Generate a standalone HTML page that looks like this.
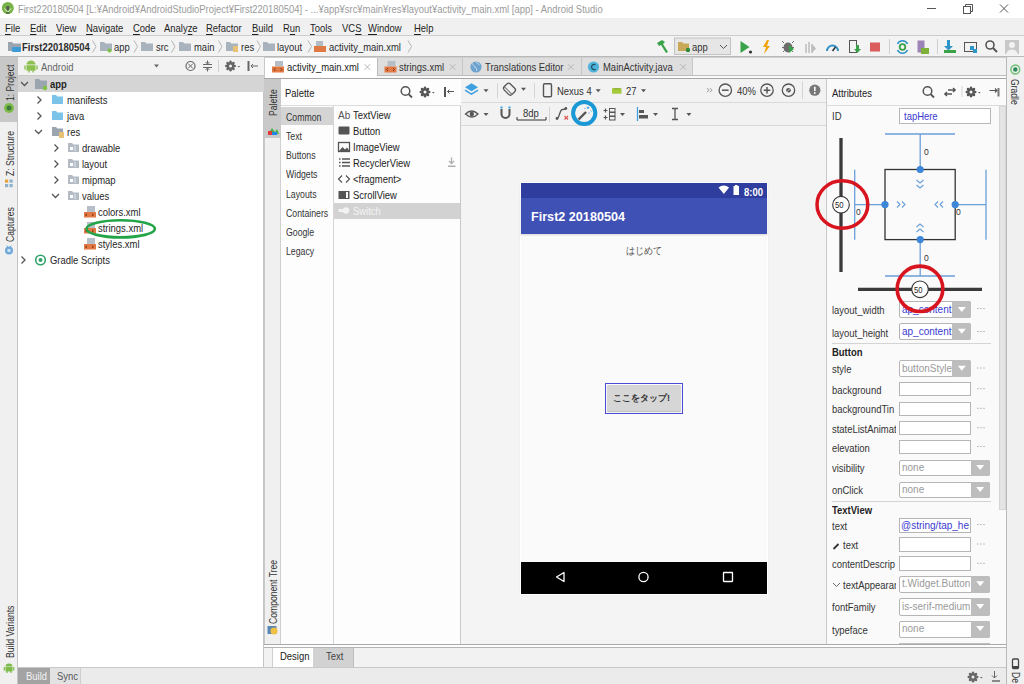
<!DOCTYPE html>
<html><head><meta charset="utf-8"><style>
*{box-sizing:border-box;margin:0;padding:0}
html,body{width:1024px;height:684px;overflow:hidden;background:#f2f2f2;font-family:"Liberation Sans",sans-serif;font-size:10px;color:#333}
.a{position:absolute}
.t{position:absolute;white-space:nowrap;font-size:10.5px;line-height:12px;color:#333;transform:scaleX(var(--sx,0.9));transform-origin:0 50%}
svg{position:absolute;overflow:visible}
.rot{position:absolute;white-space:nowrap;font-size:10px;line-height:12px;color:#333;transform-origin:0 0}
</style></head><body>
<div class="a" style="left:0px;top:0px;width:1024px;height:18px;background:#fff"></div>
<svg style="left:0px;top:0px" width="18" height="18" viewBox="0 0 18 18"><circle cx="7.8" cy="8" r="6" fill="#78b347"/><path d="M6.2 6.3h3.2l-0.6 4.2h-2z" fill="#555"/><path d="M4.6 8.6l3.2 3.6 3.4-3.8" stroke="#e8f3dc" stroke-width="1" fill="none"/><rect x="6" y="12.2" width="3.6" height="1.4" fill="#3b5f2a"/></svg>
<div class="t" style="left:18px;top:3px;color:#9b9b9b;">First220180504 [L:¥Android¥AndroidStudioProject¥First220180504] - ...¥app¥src¥main¥res¥layout¥activity_main.xml [app] - Android Studio</div>
<div class="a" style="left:927px;top:8px;width:9px;height:1px;background:#555"></div>
<svg style="left:962px;top:3px" width="12" height="12" viewBox="0 0 12 12"><rect x="1.5" y="3.5" width="7" height="7" fill="none" stroke="#555"/><path d="M3.5 3.5V1.5H10.5V8.5H8.5" fill="none" stroke="#555"/></svg>
<svg style="left:999px;top:4px" width="10" height="10" viewBox="0 0 10 10"><path d="M1 0.5L9 8.5M9 0.5L1 8.5" stroke="#555" stroke-width="1"/></svg>
<div class="a" style="left:0px;top:18px;width:1024px;height:18px;background:#f0f0f0;border-bottom:1px solid #cdcdcd"></div>
<div class="t" style="left:4.9px;top:22px;color:#1e1e1e;"><u style="text-underline-offset:1.5px">F</u>ile</div>
<div class="t" style="left:29.5px;top:22px;color:#1e1e1e;"><u style="text-underline-offset:1.5px">E</u>dit</div>
<div class="t" style="left:55.9px;top:22px;color:#1e1e1e;"><u style="text-underline-offset:1.5px">V</u>iew</div>
<div class="t" style="left:85.8px;top:22px;color:#1e1e1e;"><u style="text-underline-offset:1.5px">N</u>avigate</div>
<div class="t" style="left:132.7px;top:22px;color:#1e1e1e;"><u style="text-underline-offset:1.5px">C</u>ode</div>
<div class="t" style="left:164.0px;top:22px;color:#1e1e1e;">Analy<u style="text-underline-offset:1.5px">z</u>e</div>
<div class="t" style="left:206.3px;top:22px;color:#1e1e1e;"><u style="text-underline-offset:1.5px">R</u>efactor</div>
<div class="t" style="left:252.0px;top:22px;color:#1e1e1e;"><u style="text-underline-offset:1.5px">B</u>uild</div>
<div class="t" style="left:283.3px;top:22px;color:#1e1e1e;">R<u style="text-underline-offset:1.5px">u</u>n</div>
<div class="t" style="left:309.7px;top:22px;color:#1e1e1e;"><u style="text-underline-offset:1.5px">T</u>ools</div>
<div class="t" style="left:341.9px;top:22px;color:#1e1e1e;">VC<u style="text-underline-offset:1.5px">S</u></div>
<div class="t" style="left:368.3px;top:22px;color:#1e1e1e;"><u style="text-underline-offset:1.5px">W</u>indow</div>
<div class="t" style="left:413.7px;top:22px;color:#1e1e1e;"><u style="text-underline-offset:1.5px">H</u>elp</div>
<div class="a" style="left:0px;top:36px;width:1024px;height:21px;background:#f3f3f3;border-bottom:1px solid #b9b9b9"></div>
<svg style="left:0;top:0" width="1024" height="60"><path d="M8 42h4l1.5 1.5H21V51H8Z" fill="#9aa5b0"/><rect x="12" y="47" width="9" height="5" rx="1" fill="#3d9bd6"/><path d="M100 42h4l1.5 1.5H112V51H100Z" fill="#a9b3bd"/><circle cx="109.5" cy="50.5" r="2" fill="#7fc241"/><path d="M141 42h4l1.5 1.5H153V51H141Z" fill="#a9b3bd"/><path d="M179 42h4l1.5 1.5H191V51H179Z" fill="#a9b3bd"/><path d="M226 42h4l1.5 1.5H238V51H226Z" fill="#a9b3bd"/><rect x="233" y="46" width="5" height="6" fill="#e8c277"/><path d="M263 42h4l1.5 1.5H275V51H263Z" fill="#a9b3bd"/><rect x="316" y="41" width="7" height="5" fill="#b3bcc6"/><rect x="314" y="46" width="12" height="6" fill="#e07a45"/><path d="M92.5 40.5L96.0 46.5L92.5 52.5" fill="none" stroke="#b5b5b5" stroke-width="1"/><path d="M134 40.5L137.5 46.5L134 52.5" fill="none" stroke="#b5b5b5" stroke-width="1"/><path d="M171.5 40.5L175.0 46.5L171.5 52.5" fill="none" stroke="#b5b5b5" stroke-width="1"/><path d="M218.5 40.5L222.0 46.5L218.5 52.5" fill="none" stroke="#b5b5b5" stroke-width="1"/><path d="M257 40.5L260.5 46.5L257 52.5" fill="none" stroke="#b5b5b5" stroke-width="1"/><path d="M308 40.5L311.5 46.5L308 52.5" fill="none" stroke="#b5b5b5" stroke-width="1"/><path d="M408 40.5L411.5 46.5L408 52.5" fill="none" stroke="#b5b5b5" stroke-width="1"/></svg>
<div class="t" style="left:22px;top:41px;font-weight:bold;color:#2b2b2b;">First220180504</div>
<div class="t" style="left:114.2px;top:41px;color:#2b2b2b">app</div>
<div class="t" style="left:155.6px;top:41px;color:#2b2b2b">src</div>
<div class="t" style="left:193.9px;top:41px;color:#2b2b2b">main</div>
<div class="t" style="left:240.5px;top:41px;color:#2b2b2b">res</div>
<div class="t" style="left:277px;top:41px;color:#2b2b2b">layout</div>
<div class="t" style="left:329px;top:41px;color:#2b2b2b">activity_main.xml</div>
<svg style="left:0;top:0" width="1024" height="60"><path d="M657 43l5-3 3 2-2 2 5 8-2 1-5-8-2 1z" fill="#3aa34a"/><rect x="674.5" y="38" width="56" height="16.5" fill="#e6e6e6" stroke="#c2c2c2"/><path d="M678 42h4l1.5 1.5H689V51H678Z" fill="#c9a857"/><circle cx="688" cy="50" r="2.2" fill="#2e8b3e"/><path d="M720 45l3.5 3.5L727 45" fill="none" stroke="#555" stroke-width="1"/><path d="M740.5 41v12l9-6z" fill="#3aa34a"/><circle cx="750.5" cy="52" r="1.6" fill="#333"/><path d="M767 40l-4 7h3l-2 7 6-8h-3l2-6z" fill="#f0a30a"/><ellipse cx="788" cy="47.5" rx="4.5" ry="5" fill="#6d6d6d"/><path d="M784 43l-2-2M792 43l2-2M782 47.5h2M792 47.5h2M783 52l1.5-1.5M793 52l-1.5-1.5" stroke="#6d6d6d"/><path d="M789 45v8l5-4z" fill="#3aa34a"/><path d="M806 44v9M809 42v11M812 44v9" stroke="#bdbdbd" stroke-width="1.5"/><path d="M812 44l4 4.5-4 4.5z" fill="#bdbdbd"/><path d="M827 51a5.5 5.5 0 0 1 11 0" fill="none" stroke="#3592c4" stroke-width="2"/><path d="M832.5 51l3-4" stroke="#333" stroke-width="1.5"/><rect x="849.5" y="40.5" width="7" height="12" fill="none" stroke="#555" stroke-width="1"/><path d="M856 45h3v4h2l-3.5 4l-3.5-4h2z" fill="#3aa34a"/><rect x="870" y="42.5" width="10" height="9" fill="#db5c5c"/><path d="M889.5 39v15M937.5 39v15" stroke="#cfcfcf"/><path d="M897.5 44a5.5 5.5 0 0 1 10 0M907.5 50a5.5 5.5 0 0 1-10 0" fill="none" stroke="#2f95c9" stroke-width="1.6"/><circle cx="902.5" cy="47" r="2.8" fill="none" stroke="#3aa34a" stroke-width="1.8"/><rect x="917.5" y="40.5" width="7" height="12" fill="#9d84b7"/><rect x="921" y="48" width="8" height="6" fill="#7fb03a"/><path d="M947 40v6l-3 0l4.5 4.5l4.5-4.5h-3v-6z" fill="#2f95c9"/><rect x="944" y="50" width="12" height="3" fill="#3aa34a"/><rect x="964.5" y="42.5" width="12" height="9" fill="none" stroke="#555"/><rect x="970" y="46" width="4" height="4" fill="#2f95c9"/><rect x="973" y="49" width="4" height="4" fill="#2f95c9"/><circle cx="990" cy="45" r="4" fill="none" stroke="#555" stroke-width="1.6"/><path d="M993 48l4 4" stroke="#555" stroke-width="2"/><rect x="1005" y="40" width="14" height="14" fill="#c8c8c8"/><circle cx="1012" cy="45" r="3" fill="#f2f2f2"/><path d="M1006.5 54a5.5 4.5 0 0 1 11 0z" fill="#f2f2f2"/></svg>
<div class="t" style="left:692px;top:41px;color:#333">app</div>
<div class="a" style="left:0px;top:57px;width:18px;height:627px;background:#f0f0f0;border-right:1px solid #c4c4c4"></div>
<div class="a" style="left:0px;top:57px;width:17px;height:65px;background:#c8c8c8"></div>
<div class="rot" style="left:4.800000000000001px;top:100.6px;transform:rotate(-90deg) scaleX(0.86);">1: Project</div>
<div class="rot" style="left:4.800000000000001px;top:176px;transform:rotate(-90deg) scaleX(0.86);">Z: Structure</div>
<div class="rot" style="left:4.800000000000001px;top:241.7px;transform:rotate(-90deg) scaleX(0.86);">Captures</div>
<div class="rot" style="left:4.800000000000001px;top:658px;transform:rotate(-90deg) scaleX(0.86);">Build Variants</div>
<svg style="left:0;top:0" width="20" height="684"><circle cx="9" cy="108" r="5" fill="#7dbb4a"/><circle cx="9" cy="108" r="2.5" fill="#3f7a3a"/><rect x="5" y="179.5" width="3.2" height="3.2" fill="#e8a23c"/><rect x="9.5" y="179.5" width="3.2" height="3.2" fill="#8fb2cc"/><rect x="5" y="184" width="3.2" height="3.2" fill="#8fb2cc"/><rect x="9.5" y="184" width="3.2" height="3.2" fill="#8fb2cc"/><circle cx="9" cy="250.5" r="4" fill="#6fa8d8"/><circle cx="9" cy="250.5" r="1.8" fill="#c9e2f5"/><path d="M6.5 245.5l1.5 1.5M11.5 245.5l-1.5 1.5" stroke="#6fa8d8"/><path d="M5.5 666.5a3.5 3 0 0 1 7 0z" fill="#7dbb4a"/><rect x="5.5" y="667" width="7" height="4.5" fill="#7dbb4a"/><path d="M4.3 667v3.5M13.7 667v3.5M7 671v2M11 671v2" stroke="#7dbb4a" stroke-width="1.2"/></svg>
<div class="a" style="left:18px;top:57px;width:246px;height:610px;background:#fff;border-right:1px solid #c4c4c4"></div>
<div class="a" style="left:18px;top:57px;width:246px;height:19px;background:#f2f2f2;border-bottom:1px solid #c9c9c9"></div>
<div class="a" style="left:18px;top:76px;width:246px;height:16px;background:#d5d5d5"></div>
<svg style="left:0;top:0" width="270" height="80"><path d="M26.5 64.5a4.5 4 0 0 1 9 0z" fill="#8cc152"/><rect x="26.5" y="65.2" width="9" height="5.5" fill="#8cc152"/><path d="M25 65.5v4M37 65.5v4" stroke="#8cc152" stroke-width="1.4"/><path d="M29 70.5v2M33 70.5v2" stroke="#8cc152" stroke-width="1.4"/><path d="M154 64.5h5l-2.5 3z" fill="#666"/><circle cx="190.5" cy="66" r="4.5" fill="none" stroke="#666" stroke-width="1.2"/><path d="M188 63.5l5 5M193 63.5l-5 5" stroke="#666" stroke-width="1"/><path d="M203 64.5h9M203 67.5h9M207.5 60.5v3M207.5 68.5v3M205.5 62l2 2 2-2M205.5 70l2-2 2 2" stroke="#666" stroke-width="1" fill="none"/><path d="M218.5 60v12" stroke="#d0d0d0"/><circle cx="230.5" cy="66" r="3.9" fill="#666"/><circle cx="234.80" cy="66.00" r="1.2" fill="#666"/><circle cx="233.54" cy="69.04" r="1.2" fill="#666"/><circle cx="230.50" cy="70.30" r="1.2" fill="#666"/><circle cx="227.46" cy="69.04" r="1.2" fill="#666"/><circle cx="226.20" cy="66.00" r="1.2" fill="#666"/><circle cx="227.46" cy="62.96" r="1.2" fill="#666"/><circle cx="230.50" cy="61.70" r="1.2" fill="#666"/><circle cx="233.54" cy="62.96" r="1.2" fill="#666"/><circle cx="230.5" cy="66" r="1.5" fill="#f2f2f2"/><path d="M237.5 66h2.6l-1.3 1.6z" fill="#666"/><path d="M248.5 61v10" stroke="#666" stroke-width="2"/><path d="M251 66h7M253 64l-2 2 2 2" stroke="#666" stroke-width="1" fill="none"/></svg>
<div class="t" style="left:41px;top:61px;color:#666">Android</div>
<div class="t" style="left:49.7px;top:78px;font-weight:bold;color:#262626">app</div>
<div class="t" style="left:66.5px;top:94px;color:#262626">manifests</div>
<div class="t" style="left:66.5px;top:110px;color:#262626">java</div>
<div class="t" style="left:66.5px;top:126px;color:#262626">res</div>
<div class="t" style="left:82.4px;top:142px;color:#262626">drawable</div>
<div class="t" style="left:82.4px;top:158px;color:#262626">layout</div>
<div class="t" style="left:82.4px;top:174px;color:#262626">mipmap</div>
<div class="t" style="left:82.4px;top:190px;color:#262626">values</div>
<div class="t" style="left:98.4px;top:206px;color:#262626">colors.xml</div>
<div class="t" style="left:98.4px;top:222px;color:#262626">strings.xml</div>
<div class="t" style="left:98.4px;top:238px;color:#262626">styles.xml</div>
<div class="t" style="left:50.4px;top:254px;color:#262626">Gradle Scripts</div>
<svg style="left:0;top:0" width="270" height="280"><path d="M21 82L24.5 85.5L28 82" fill="none" stroke="#555" stroke-width="1.3"/><path d="M35 79h4l1.5 1.5H47V89H35Z" fill="#9aa5b0"/><circle cx="45" cy="88" r="2.2" fill="#7fc241"/><path d="M37.5 96.5L41.0 100L37.5 103.5" fill="none" stroke="#555" stroke-width="1.3"/><path d="M52 95h4l1.5 1.5H63V104H52Z" fill="#7cc3ea"/><path d="M37.5 112.5L41.0 116L37.5 119.5" fill="none" stroke="#555" stroke-width="1.3"/><path d="M52 111h4l1.5 1.5H63V120H52Z" fill="#7cc3ea"/><path d="M35 130L38.5 133.5L42 130" fill="none" stroke="#555" stroke-width="1.3"/><path d="M52 127h4l1.5 1.5H63V136H52Z" fill="#9aa5b0"/><rect x="59" y="132" width="5" height="6" fill="#e8c277"/><path d="M54.5 144.5L58.0 148L54.5 151.5" fill="none" stroke="#555" stroke-width="1.3"/><path d="M68 143h4l1.5 1.5H79V152H68Z" fill="#b3bcc5"/><rect x="70" y="147" width="3" height="3" fill="#fff"/><rect x="74.5" y="146" width="1" height="5" fill="#e6eaee"/><path d="M54.5 160.5L58.0 164L54.5 167.5" fill="none" stroke="#555" stroke-width="1.3"/><path d="M68 159h4l1.5 1.5H79V168H68Z" fill="#b3bcc5"/><rect x="70" y="163" width="3" height="3" fill="#fff"/><rect x="74.5" y="162" width="1" height="5" fill="#e6eaee"/><path d="M54.5 176.5L58.0 180L54.5 183.5" fill="none" stroke="#555" stroke-width="1.3"/><path d="M68 175h4l1.5 1.5H79V184H68Z" fill="#b3bcc5"/><rect x="70" y="179" width="3" height="3" fill="#fff"/><rect x="74.5" y="178" width="1" height="5" fill="#e6eaee"/><path d="M52 194L55.5 197.5L59 194" fill="none" stroke="#555" stroke-width="1.3"/><path d="M68 191h4l1.5 1.5H79V200H68Z" fill="#b3bcc5"/><rect x="70" y="195" width="3" height="3" fill="#fff"/><rect x="74.5" y="194" width="1" height="5" fill="#e6eaee"/><rect x="87" y="206" width="8" height="6" fill="#b6bfc8"/><rect x="84" y="212" width="12" height="5.5" fill="#e27a45"/><path d="M87 213.5l-1.5 1.25 1.5 1.25M92 213.5l1.5 1.25-1.5 1.25" stroke="#7a2d10" fill="none" stroke-width="0.9"/><rect x="87" y="222" width="8" height="6" fill="#b6bfc8"/><rect x="84" y="228" width="12" height="5.5" fill="#e27a45"/><path d="M87 229.5l-1.5 1.25 1.5 1.25M92 229.5l1.5 1.25-1.5 1.25" stroke="#7a2d10" fill="none" stroke-width="0.9"/><rect x="87" y="238" width="8" height="6" fill="#b6bfc8"/><rect x="84" y="244" width="12" height="5.5" fill="#e27a45"/><path d="M87 245.5l-1.5 1.25 1.5 1.25M92 245.5l1.5 1.25-1.5 1.25" stroke="#7a2d10" fill="none" stroke-width="0.9"/><path d="M21.5 256.5L25.0 260L21.5 263.5" fill="none" stroke="#555" stroke-width="1.3"/><circle cx="40.5" cy="260" r="4.8" fill="none" stroke="#2fa36b" stroke-width="1.6"/><circle cx="40.5" cy="260" r="2" fill="#2fa36b"/></svg>
<svg style="left:0px;top:0px" width="270" height="280" viewBox="0 0 270 280"><ellipse cx="120.7" cy="228.8" rx="34.2" ry="8.6" fill="none" stroke="#22a447" stroke-width="2.6"/></svg>
<div class="a" style="left:18px;top:667px;width:988px;height:17px;background:#ebebeb;border-top:1px solid #c9c9c9"></div>
<div class="a" style="left:18px;top:668px;width:32px;height:16px;background:#a3a3a3"></div>
<div class="a" style="left:50px;top:668px;width:31px;height:16px;background:#e2e2e2;border-right:1px solid #cfcfcf"></div>
<div class="t" style="left:26px;top:670px;color:#f4f4f4">Build</div>
<div class="t" style="left:57px;top:670px;color:#555">Sync</div>
<svg style="left:0;top:0" width="1024" height="684"><circle cx="973" cy="677" r="3.9" fill="#666"/><circle cx="977.30" cy="677.00" r="1.2" fill="#666"/><circle cx="976.04" cy="680.04" r="1.2" fill="#666"/><circle cx="973.00" cy="681.30" r="1.2" fill="#666"/><circle cx="969.96" cy="680.04" r="1.2" fill="#666"/><circle cx="968.70" cy="677.00" r="1.2" fill="#666"/><circle cx="969.96" cy="673.96" r="1.2" fill="#666"/><circle cx="973.00" cy="672.70" r="1.2" fill="#666"/><circle cx="976.04" cy="673.96" r="1.2" fill="#666"/><circle cx="973" cy="677" r="1.5" fill="#ebebeb"/><path d="M980 677h2.6l-1.3 1.6z" fill="#666"/><path d="M994.5 671v7M992 675.5l2.5 2.5 2.5-2.5" stroke="#666" fill="none"/><rect x="992" y="680" width="8" height="2" fill="#888"/></svg>
<div class="a" style="left:264px;top:57px;width:742px;height:21px;background:#f2f2f2"></div>
<div class="a" style="left:264px;top:76px;width:742px;height:2px;background:#fafafa"></div>
<div class="a" style="left:264px;top:78px;width:742px;height:1px;background:#a6a6a6"></div>
<div class="a" style="left:264px;top:57px;width:113px;height:21px;background:#fff;border-left:1px solid #c9c9c9"></div>
<div class="a" style="left:377px;top:58px;width:85px;height:18px;background:#dedede;border-left:1px solid #bdbdbd;border-bottom:1px solid #bdbdbd"></div>
<div class="a" style="left:462px;top:58px;width:118.6px;height:18px;background:#dedede;border-left:1px solid #c6c6c6;border-bottom:1px solid #bdbdbd"></div>
<div class="a" style="left:580.6px;top:58px;width:112.4px;height:18px;background:#dedede;border-left:1px solid #c6c6c6;border-right:1px solid #c6c6c6;border-bottom:1px solid #bdbdbd"></div>
<div class="a" style="left:264px;top:57px;width:742px;height:1px;background:#cfcfcf"></div>
<div class="a" style="left:693px;top:75px;width:313px;height:1px;background:#bdbdbd"></div>
<svg style="left:0;top:0" width="1024" height="80"><rect x="275" y="61" width="8" height="5.5" fill="#b6bfc8"/><rect x="272" y="66.5" width="12" height="6" fill="#e27a45"/><path d="M275.5 68l-1.5 1.5 1.5 1.5M280.5 68l1.5 1.5-1.5 1.5" stroke="#7a2d10" fill="none" stroke-width="0.9"/><rect x="387.5" y="61" width="8" height="5.5" fill="#b6bfc8"/><rect x="384.5" y="66.5" width="12" height="6" fill="#e27a45"/><path d="M388.0 68l-1.5 1.5 1.5 1.5M393.0 68l1.5 1.5-1.5 1.5" stroke="#7a2d10" fill="none" stroke-width="0.9"/><circle cx="476" cy="67" r="5.6" fill="#6fa3cf"/><path d="M472 63.5c2 1 1 3 3 3.5s1 3 2 4M476.5 61.8c0 2 2 2 3 3" stroke="#c8dced" fill="none" stroke-width="1"/><circle cx="593.5" cy="67" r="5.6" fill="#4fb3d9"/><path d="M595.5 64.8a2.6 2.6 0 1 0 0 4.4" fill="none" stroke="#1f4f66" stroke-width="1.3"/><path d="M364.59999999999997 64.2l5.6 5.6M370.2 64.2l-5.6 5.6" stroke="#b8b8b8" stroke-width="1"/><path d="M449.8 64.2l5.6 5.6M455.40000000000003 64.2l-5.6 5.6" stroke="#b8b8b8" stroke-width="1"/><path d="M568.0 64.2l5.6 5.6M573.5999999999999 64.2l-5.6 5.6" stroke="#b8b8b8" stroke-width="1"/><path d="M680.4000000000001 64.2l5.6 5.6M686.0 64.2l-5.6 5.6" stroke="#b8b8b8" stroke-width="1"/></svg>
<div class="t" style="left:286.6px;top:61px;color:#222">activity_main.xml</div>
<div class="t" style="left:399.4px;top:61px;color:#333">strings.xml</div>
<div class="t" style="left:484.9px;top:61px;color:#333;">Translations Editor</div>
<div class="t" style="left:602.6px;top:61px;color:#333;">MainActivity.java</div>
<div class="a" style="left:264px;top:79px;width:17px;height:566px;background:#f0f0f0;border-right:1px solid #d0d0d0;border-left:1px solid #c9c9c9"></div>
<div class="a" style="left:265px;top:79px;width:16px;height:59px;background:#c9c9c9"></div>
<div class="rot" style="left:268px;top:115.7px;transform:rotate(-90deg) scaleX(0.86);">Palette</div>
<div class="rot" style="left:268px;top:624px;transform:rotate(-90deg) scaleX(0.86);">Component Tree</div>
<svg style="left:0;top:0" width="290" height="684"><path d="M268 134l4-6 3 4 2-3 2 5z" fill="#4caf50"/><rect x="268" y="131" width="4" height="4" fill="#e53935"/><rect x="272" y="132" width="5" height="3" fill="#1e88e5"/><rect x="267.5" y="626" width="9" height="8" fill="#5b87b6"/><circle cx="274" cy="631" r="3.5" fill="#f0c040"/></svg>
<div class="a" style="left:281px;top:79px;width:180px;height:27px;background:#fdfdfd;border-bottom:1px solid #dcdcdc"></div>
<div class="a" style="left:281px;top:106px;width:53px;height:539px;background:#fdfdfd;border-right:1px solid #d6d6d6"></div>
<div class="a" style="left:334px;top:106px;width:127px;height:539px;background:#fdfdfd;border-right:1px solid #c9c9c9"></div>
<div class="a" style="left:281px;top:106.5px;width:52px;height:18.5px;background:#d4d4d4"></div>
<div class="a" style="left:334px;top:202.5px;width:126px;height:16px;background:#d2d2d2"></div>
<div class="t" style="left:285.2px;top:87px;color:#222">Palette</div>
<div class="t" style="left:285.6px;top:110.8px;color:#333;--sx:0.83">Common</div>
<div class="t" style="left:285.6px;top:130.0px;color:#333;--sx:0.83">Text</div>
<div class="t" style="left:285.6px;top:149.2px;color:#333;--sx:0.83">Buttons</div>
<div class="t" style="left:285.6px;top:168.4px;color:#333;--sx:0.83">Widgets</div>
<div class="t" style="left:285.6px;top:187.6px;color:#333;--sx:0.83">Layouts</div>
<div class="t" style="left:285.6px;top:206.8px;color:#333;--sx:0.83">Containers</div>
<div class="t" style="left:285.6px;top:226.0px;color:#333;--sx:0.83">Google</div>
<div class="t" style="left:285.6px;top:245.2px;color:#333;--sx:0.83">Legacy</div>
<div class="t" style="left:353px;top:109px;color:#222">TextView</div>
<div class="t" style="left:353px;top:125px;color:#222">Button</div>
<div class="t" style="left:353px;top:141px;color:#222">ImageView</div>
<div class="t" style="left:353px;top:157px;color:#222">RecyclerView</div>
<div class="t" style="left:353px;top:173px;color:#222">&lt;fragment&gt;</div>
<div class="t" style="left:353px;top:189px;color:#222">ScrollView</div>
<div class="t" style="left:353px;top:205px;color:#f4f4f4">Switch</div>
<svg style="left:0;top:0" width="470" height="240"><text x="338" y="118.5" font-family="Liberation Sans" font-size="10" fill="#555">Ab</text><rect x="338.5" y="126.5" width="11" height="8" rx="1" fill="#555"/><rect x="338.5" y="142.5" width="11" height="9" fill="none" stroke="#555" stroke-width="1.3"/><path d="M339 151l3.5-4 2.5 2.5 2-2 2.5 3.5z" fill="#555"/><path d="M339 159h1.5M339 162.5h1.5M339 166h1.5M342 159h8M342 162.5h8M342 166h8" stroke="#555" stroke-width="1.3"/><path d="M342 175.5l-3.5 3.5 3.5 3.5M346 175.5l3.5 3.5-3.5 3.5" stroke="#555" stroke-width="1.2" fill="none"/><rect x="338.5" y="191" width="11" height="8" fill="#555"/><rect x="346" y="192" width="2" height="6" fill="#fafafa"/><rect x="338.5" y="209" width="5" height="3" fill="#f2f2f2"/><circle cx="346" cy="210.5" r="3.2" fill="#f2f2f2"/><path d="M451.5 157.5v6M449 161l2.5 2.5 2.5-2.5" stroke="#b0b0b0" fill="none" stroke-width="1.3"/><rect x="448" y="165.5" width="7.5" height="1.5" fill="#b0b0b0"/><circle cx="405.5" cy="91" r="4.3" fill="none" stroke="#555" stroke-width="1.5"/><path d="M408.5 94l3.5 3.5" stroke="#555" stroke-width="1.8"/><circle cx="425" cy="92" r="3.9" fill="#555"/><circle cx="429.30" cy="92.00" r="1.2" fill="#555"/><circle cx="428.04" cy="95.04" r="1.2" fill="#555"/><circle cx="425.00" cy="96.30" r="1.2" fill="#555"/><circle cx="421.96" cy="95.04" r="1.2" fill="#555"/><circle cx="420.70" cy="92.00" r="1.2" fill="#555"/><circle cx="421.96" cy="88.96" r="1.2" fill="#555"/><circle cx="425.00" cy="87.70" r="1.2" fill="#555"/><circle cx="428.04" cy="88.96" r="1.2" fill="#555"/><circle cx="425" cy="92" r="1.5" fill="#fdfdfd"/><path d="M432 92h2.6l-1.3 1.6z" fill="#555"/><path d="M445 87v10" stroke="#555" stroke-width="2"/><path d="M447.5 91.5h6.5M449.5 89.5l-2 2 2 2" stroke="#555" stroke-width="1" fill="none"/></svg>
<div class="a" style="left:264px;top:644px;width:742px;height:1px;background:#a9a9a9"></div>
<div class="a" style="left:264px;top:645px;width:742px;height:2px;background:#fdfdfd"></div>
<div class="a" style="left:264px;top:647px;width:742px;height:1px;background:#b4b4b4"></div>
<div class="a" style="left:264px;top:648px;width:742px;height:19px;background:#f2f2f2"></div>
<div class="a" style="left:265px;top:648px;width:8px;height:19px;background:#f2f2f2;border-right:1px solid #cfcfcf"></div>
<div class="a" style="left:273px;top:648px;width:40px;height:19px;background:#fff"></div>
<div class="a" style="left:313px;top:648px;width:41px;height:19px;background:#d2d2d2;border-right:1px solid #bdbdbd"></div>
<div class="t" style="left:280px;top:650px;color:#222">Design</div>
<div class="t" style="left:326px;top:650px;color:#444">Text</div>
<div class="a" style="left:461px;top:79px;width:365px;height:24px;background:#f2f2f2;border-bottom:1px solid #dadada"></div>
<div class="a" style="left:461px;top:103px;width:365px;height:23px;background:#f2f2f2;border-bottom:1px solid #d8d8d8"></div>
<div class="a" style="left:461px;top:126px;width:365px;height:518px;background:#f4f4f4"></div>
<svg style="left:0;top:0" width="830" height="130"><g transform="translate(0,-0.8)"><path d="M471.5 84l6.5 4-6.5 4-6.5-4z" fill="#3d9fe0"/><path d="M465 91l6.5 4 6.5-4" fill="none" stroke="#3d9fe0" stroke-width="1.5"/><path d="M483.5 90.0h5l-2.5 3z" fill="#555"/><path d="M497.5 84v15M534.5 84v15" stroke="#d4d4d4"/><g transform="rotate(-45 509.5 90)"><rect x="505.2" y="84.5" width="8.6" height="11" rx="2.5" fill="none" stroke="#555" stroke-width="1.3"/><path d="M507.6 85v10" stroke="#666" stroke-width="1"/></g><path d="M521 88.5h5l-2.5 3z" fill="#555"/><rect x="543.5" y="84.5" width="8" height="13" rx="1.2" fill="none" stroke="#555" stroke-width="1.4"/><path d="M595.7 90.0h5l-2.5 3z" fill="#555"/><rect x="612" y="89" width="9.5" height="5.5" fill="#a4c93a"/><path d="M613.5 89.5h6.5" stroke="#7fa02a" stroke-width="0.8"/><path d="M641 90.0h5l-2.5 3z" fill="#555"/><path d="M707 89l2 2-2 2M710 89l2 2-2 2" stroke="#888" fill="none" stroke-width="0.9"/><circle cx="725.3" cy="91" r="6.2" fill="none" stroke="#555" stroke-width="1.3"/><path d="M722 91h6.6" stroke="#555" stroke-width="1.5"/><circle cx="767" cy="91" r="6.2" fill="none" stroke="#555" stroke-width="1.3"/><path d="M763.7 91h6.6M767 87.7v6.6" stroke="#555" stroke-width="1.5"/><circle cx="788.5" cy="91" r="6.2" fill="none" stroke="#555" stroke-width="1.3"/><circle cx="788.5" cy="91" r="2.3" fill="#555"/><path d="M786.5 93l4-4" stroke="#f2f2f2" stroke-width="0.8"/><path d="M802.5 82v18" stroke="#d4d4d4"/><circle cx="814.8" cy="91" r="5.6" fill="#777"/><path d="M814.8 87.5v4.2" stroke="#fff" stroke-width="1.6"/><circle cx="814.8" cy="93.8" r="0.9" fill="#fff"/></g><path d="M465.5 114q6-6 12.5 0q-6 6-12.5 0z" fill="none" stroke="#555" stroke-width="1.3"/><circle cx="471.8" cy="114" r="2.2" fill="#555"/><path d="M483.5 113.0h5l-2.5 3z" fill="#555"/><path d="M501.5 109v5a4 4 0 0 0 8 0v-5" fill="none" stroke="#555" stroke-width="2"/><path d="M500.5 107.5h2M508.5 107.5h2" stroke="#3d9fe0" stroke-width="2"/><path d="M517 117v3h29v-3" fill="none" stroke="#333" stroke-width="1"/><path d="M549.5 107v15" stroke="#d4d4d4"/><path d="M557 118.5c2.5 0 2.5-9 5.5-9c1 0 2 0 3-0.8" fill="none" stroke="#555" stroke-width="1.3"/><circle cx="557" cy="118.5" r="1.4" fill="#555"/><circle cx="565.8" cy="108.5" r="1.4" fill="#555"/><path d="M564.5 116l3.5 3.5M568 116l-3.5 3.5" stroke="#d9534f" stroke-width="1.1"/><path d="M578.5 119.5l7.5-7.5" stroke="#555" stroke-width="2.4"/><path d="M588 106.5v2.5M586.8 107.7h2.5M590.5 110.5l1 1M584.5 108l1 1M589 112.5v1" stroke="#3d9fe0" stroke-width="1"/><circle cx="584.2" cy="113" r="11.1" fill="none" stroke="#1a98d5" stroke-width="4"/><path d="M603.5 110.5h4M605.5 108.5v4M603.5 117.5h4M605.5 115.5v4" stroke="#555" stroke-width="1.2" fill="none"/><rect x="609.5" y="108.5" width="5.5" height="3.5" fill="none" stroke="#555" stroke-width="1"/><rect x="609.5" y="112.5" width="5.5" height="3.5" fill="none" stroke="#555" stroke-width="1"/><rect x="609.5" y="116.5" width="5.5" height="3.5" fill="none" stroke="#555" stroke-width="1"/><path d="M620 113.0h5l-2.5 3z" fill="#555"/><path d="M637.5 107v14" stroke="#3d9fe0" stroke-width="1.3"/><rect x="639" y="110" width="5" height="3" fill="#555"/><rect x="639" y="115" width="9" height="3.5" fill="#555"/><path d="M653 113.0h5l-2.5 3z" fill="#555"/><path d="M672 108.5h6M675 108.5v11M672 119.5h6" stroke="#555" stroke-width="1.3"/><path d="M686.4 113.0h5l-2.5 3z" fill="#555"/></svg>
<div class="t" style="left:556.7px;top:85px;color:#333">Nexus 4</div>
<div class="t" style="left:626.4px;top:85px;color:#333">27</div>
<div class="t" style="left:736.5px;top:85px;color:#333;">40%</div>
<div class="t" style="left:523px;top:106.5px;color:#333">8dp</div>
<div class="a" style="left:520.5px;top:183px;width:246px;height:410.5px;background:#fafafa;outline:1px solid #fff;box-shadow:0 0 3px rgba(0,0,0,0.10)"></div>
<div class="a" style="left:520.5px;top:183px;width:246px;height:15px;background:#2f3e9e"></div>
<div class="a" style="left:520.5px;top:198px;width:246px;height:36.3px;background:#3f51b5;box-shadow:0 1px 2px rgba(0,0,0,0.15)"></div>
<div class="t" style="left:531px;top:210px;font-size:13px;line-height:14px;color:#fff;font-weight:bold;--sx:0.97">First2 20180504</div>
<div class="t" style="left:743.5px;top:187px;font-size:10px;color:#fff;font-weight:bold;--sx:0.95">8:00</div>
<svg style="left:0px;top:0px" width="1024" height="684" viewBox="0 0 1024 684"><path d="M718.5 187.5q5.3-4 10.6 0l-5.3 6.5z" fill="#fff"/><rect x="733.5" y="186" width="5.5" height="9" fill="#fff"/><rect x="735" y="185" width="2.5" height="1.5" fill="#fff"/></svg>
<div class="t" style="left:626px;top:245px;color:#555;font-size:9.5px;letter-spacing:0">はじめて</div>
<div class="a" style="left:520.5px;top:562px;width:246px;height:31.5px;background:#000"></div>
<svg style="left:0px;top:0px" width="1024" height="684" viewBox="0 0 1024 684"><path d="M564 572.5v9l-7.5-4.5z" fill="none" stroke="#fff" stroke-width="1.3" stroke-linejoin="round"/><circle cx="643.5" cy="577" r="4.6" fill="none" stroke="#fff" stroke-width="1.3"/><rect x="723.5" y="572.5" width="9" height="9" rx="0.5" fill="none" stroke="#fff" stroke-width="1.3"/></svg>
<div class="a" style="left:604.8px;top:382.8px;width:78.2px;height:30.8px;border:1.3px solid #4b4bd6;background:#fafafa"></div>
<div class="a" style="left:607.2px;top:384.8px;width:73.5px;height:25.8px;background:#d6d6d6;border-radius:1px;box-shadow:0 1px 1px rgba(0,0,0,0.25)"></div>
<div class="t" style="left:613px;top:392px;color:#333;font-size:9px;font-weight:bold;--sx:1">ここをタップ!</div>
<div class="a" style="left:826px;top:79px;width:180px;height:566px;background:#fafafa;border-left:1px solid #c9c9c9"></div>
<div class="a" style="left:826px;top:79px;width:180px;height:27px;background:#fafafa;border-bottom:1px solid #dcdcdc;border-left:1px solid #c9c9c9"></div>
<div class="a" style="left:998.5px;top:106px;width:7.5px;height:404.3px;background:#e4e4e4;border:1px solid #d6d6d6"></div>
<div class="t" style="left:832px;top:87px;color:#222">Attributes</div>
<svg style="left:0;top:0" width="1024" height="130"><circle cx="927.5" cy="91" r="4.3" fill="none" stroke="#555" stroke-width="1.5"/><path d="M930.5 94l3.5 3.5" stroke="#555" stroke-width="1.8"/><path d="M948 90h7M953 88l2.2 2-2.2 2M945 94h7M947 92l-2.2 2 2.2 2" stroke="#555" stroke-width="1.4" fill="none"/><path d="M962 86v11" stroke="#d4d4d4"/><circle cx="971" cy="92" r="3.9" fill="#555"/><circle cx="975.30" cy="92.00" r="1.2" fill="#555"/><circle cx="974.04" cy="95.04" r="1.2" fill="#555"/><circle cx="971.00" cy="96.30" r="1.2" fill="#555"/><circle cx="967.96" cy="95.04" r="1.2" fill="#555"/><circle cx="966.70" cy="92.00" r="1.2" fill="#555"/><circle cx="967.96" cy="88.96" r="1.2" fill="#555"/><circle cx="971.00" cy="87.70" r="1.2" fill="#555"/><circle cx="974.04" cy="88.96" r="1.2" fill="#555"/><circle cx="971" cy="92" r="1.5" fill="#fafafa"/><path d="M978 92h2.6l-1.3 1.6z" fill="#555"/><path d="M998.5 88v8.5" stroke="#777" stroke-width="2"/><path d="M989.5 90.5h7M995 88.5l2 2-2 2" stroke="#555" stroke-width="1.1" fill="none"/></svg>
<div class="t" style="left:832.4px;top:110px;color:#333">ID</div>
<div class="a" style="left:899px;top:108px;width:92px;height:15.5px;background:#fff;border:1px solid #b8b8b8"></div>
<div class="t" style="left:904px;top:110px;color:#3a3ad0">tapHere</div>
<svg style="left:0;top:0" width="1024" height="320"><path d="M885 134h70M920.2 134v35.5M854.7 169.8v70M854.7 204.6h30M955.2 204.6h31M986 169.8v70M920.2 239.6v36.5M885 276h70" stroke="#6a9fd8" stroke-width="1.3" fill="none"/><rect x="885" y="169.5" width="70.2" height="70.1" fill="none" stroke="#333" stroke-width="1.3"/><circle cx="920.2" cy="169.5" r="3.6" fill="#3d86d8"/><circle cx="885" cy="204.6" r="3.6" fill="#3d86d8"/><circle cx="955.2" cy="204.6" r="3.6" fill="#3d86d8"/><circle cx="920.2" cy="239.6" r="3.6" fill="#3d86d8"/><path d="M916.5 180l3.5 3 3.5-3M916.5 185l3.5 3 3.5-3M916.5 232l3.5-3 3.5 3M916.5 227l3.5-3 3.5 3M897 201.5l3 3-3 3M902 201.5l3 3-3 3M943 201.5l-3 3 3 3M938 201.5l-3 3 3 3" stroke="#6a9fd8" stroke-width="1.1" fill="none"/><path d="M841 138v134" stroke="#3a3a3a" stroke-width="3.3"/><path d="M858 289.3h124" stroke="#3a3a3a" stroke-width="3.3"/><circle cx="841" cy="204.7" r="8.3" fill="#fff" stroke="#333" stroke-width="1.1"/><circle cx="920" cy="289.3" r="8.3" fill="#fff" stroke="#333" stroke-width="1.1"/></svg>
<div class="t" style="left:923.5px;top:146px;color:#333;font-size:9.5px">0</div>
<div class="t" style="left:923.5px;top:252px;color:#333;font-size:9.5px">0</div>
<div class="t" style="left:855.5px;top:206px;color:#333;font-size:9.5px">0</div>
<div class="t" style="left:955.5px;top:206px;color:#333;font-size:9.5px">0</div>
<div class="t" style="left:835.3px;top:199px;color:#222;font-size:8.5px;">50</div>
<div class="t" style="left:914.3px;top:283.5px;color:#222;font-size:8.5px;">50</div>
<div class="a" style="left:832.3px;top:303.6px;width:63.700000000000045px;height:13px;overflow:hidden"><div class="t" style="left:0;top:0;color:#333;">layout_width</div></div>
<div class="a" style="left:899.3px;top:301.4px;width:72.0px;height:17.0px;background:#fff;border:1px solid #b5b5b5;border-radius:2px"></div>
<div class="a" style="left:952.3px;top:301.4px;width:19px;height:17.0px;background:#bdbdbd;border-radius:0 2px 2px 0"></div>
<svg style="left:0;top:0" width="1024" height="684"><path d="M957.8 306.9h8l-4 5z" fill="#fff"/></svg>
<div style="position:absolute;left:902px;top:303.9px;width:50.0px;overflow:hidden;white-space:nowrap;font-size:10px;line-height:12px;color:#3a3ad0">ap_content</div>
<svg style="left:0;top:0" width="1024" height="684"><path d="M977.5 308.6h1M980.5 308.6h1M983.5 308.6h1" stroke="#888" stroke-width="1"/></svg>
<div class="a" style="left:832.3px;top:326.5px;width:63.700000000000045px;height:13px;overflow:hidden"><div class="t" style="left:0;top:0;color:#333;">layout_height</div></div>
<div class="a" style="left:899.3px;top:323.3px;width:72.0px;height:17.0px;background:#fff;border:1px solid #b5b5b5;border-radius:2px"></div>
<div class="a" style="left:952.3px;top:323.3px;width:19px;height:17.0px;background:#bdbdbd;border-radius:0 2px 2px 0"></div>
<svg style="left:0;top:0" width="1024" height="684"><path d="M957.8 328.8h8l-4 5z" fill="#fff"/></svg>
<div style="position:absolute;left:902px;top:325.8px;width:50.0px;overflow:hidden;white-space:nowrap;font-size:10px;line-height:12px;color:#3a3ad0">ap_content</div>
<svg style="left:0;top:0" width="1024" height="684"><path d="M977.5 331.5h1M980.5 331.5h1M983.5 331.5h1" stroke="#888" stroke-width="1"/></svg>
<div class="a" style="left:832px;top:343px;width:158.5px;height:1px;background:#d4d4d4"></div>
<div class="a" style="left:832.3px;top:345.7px;width:63.700000000000045px;height:13px;overflow:hidden"><div class="t" style="left:0;top:0;color:#222;font-weight:bold;">Button</div></div>
<div class="a" style="left:832.3px;top:363.0px;width:63.700000000000045px;height:13px;overflow:hidden"><div class="t" style="left:0;top:0;color:#333;">style</div></div>
<div class="a" style="left:899.3px;top:360px;width:72.0px;height:17.30000000000001px;background:#fff;border:1px solid #b5b5b5;border-radius:2px"></div>
<div class="a" style="left:952.3px;top:360px;width:19px;height:17.30000000000001px;background:#bdbdbd;border-radius:0 2px 2px 0"></div>
<svg style="left:0;top:0" width="1024" height="684"><path d="M957.8 365.65h8l-4 5z" fill="#fff"/></svg>
<div style="position:absolute;left:902px;top:362.6px;width:50.0px;overflow:hidden;white-space:nowrap;font-size:10px;line-height:12px;color:#9a9a9a">buttonStyle</div>
<svg style="left:0;top:0" width="1024" height="684"><path d="M977.5 368h1M980.5 368h1M983.5 368h1" stroke="#888" stroke-width="1"/></svg>
<div class="a" style="left:832.3px;top:383.7px;width:63.700000000000045px;height:13px;overflow:hidden"><div class="t" style="left:0;top:0;color:#333;">background</div></div>
<div class="a" style="left:899.3px;top:382.4px;width:72px;height:14.100000000000023px;background:#fff;border:1px solid #b5b5b5"></div>
<svg style="left:0;top:0" width="1024" height="684"><path d="M977.5 388.7h1M980.5 388.7h1M983.5 388.7h1" stroke="#888" stroke-width="1"/></svg>
<div class="a" style="left:832.3px;top:403.3px;width:63.700000000000045px;height:13px;overflow:hidden"><div class="t" style="left:0;top:0;color:#333;">backgroundTin</div></div>
<div class="a" style="left:899.3px;top:402px;width:72px;height:14px;background:#fff;border:1px solid #b5b5b5"></div>
<svg style="left:0;top:0" width="1024" height="684"><path d="M977.5 408.3h1M980.5 408.3h1M983.5 408.3h1" stroke="#888" stroke-width="1"/></svg>
<div class="a" style="left:832.3px;top:422.7px;width:63.700000000000045px;height:13px;overflow:hidden"><div class="t" style="left:0;top:0;color:#333;">stateListAnimat</div></div>
<div class="a" style="left:899.3px;top:420.5px;width:72px;height:14.600000000000023px;background:#fff;border:1px solid #b5b5b5"></div>
<svg style="left:0;top:0" width="1024" height="684"><path d="M977.5 427.7h1M980.5 427.7h1M983.5 427.7h1" stroke="#888" stroke-width="1"/></svg>
<div class="a" style="left:832.3px;top:441.5px;width:63.700000000000045px;height:13px;overflow:hidden"><div class="t" style="left:0;top:0;color:#333;">elevation</div></div>
<div class="a" style="left:899.3px;top:439.7px;width:72px;height:14.600000000000023px;background:#fff;border:1px solid #b5b5b5"></div>
<svg style="left:0;top:0" width="1024" height="684"><path d="M977.5 446.5h1M980.5 446.5h1M983.5 446.5h1" stroke="#888" stroke-width="1"/></svg>
<div class="a" style="left:832.3px;top:462.4px;width:63.700000000000045px;height:13px;overflow:hidden"><div class="t" style="left:0;top:0;color:#333;">visibility</div></div>
<div class="a" style="left:899.3px;top:459.8px;width:90.40000000000009px;height:16.399999999999977px;background:#fff;border:1px solid #b5b5b5;border-radius:2px"></div>
<div class="a" style="left:970.7px;top:459.8px;width:19px;height:16.399999999999977px;background:#bdbdbd;border-radius:0 2px 2px 0"></div>
<svg style="left:0;top:0" width="1024" height="684"><path d="M976.2 465.0h8l-4 5z" fill="#fff"/></svg>
<div style="position:absolute;left:902px;top:462.0px;width:68.40000000000009px;overflow:hidden;white-space:nowrap;font-size:10px;line-height:12px;color:#9a9a9a">none</div>
<div class="a" style="left:832.3px;top:484.3px;width:63.700000000000045px;height:13px;overflow:hidden"><div class="t" style="left:0;top:0;color:#333;">onClick</div></div>
<div class="a" style="left:899.3px;top:481.7px;width:90.40000000000009px;height:16.5px;background:#fff;border:1px solid #b5b5b5;border-radius:2px"></div>
<div class="a" style="left:970.7px;top:481.7px;width:19px;height:16.5px;background:#bdbdbd;border-radius:0 2px 2px 0"></div>
<svg style="left:0;top:0" width="1024" height="684"><path d="M976.2 486.95h8l-4 5z" fill="#fff"/></svg>
<div style="position:absolute;left:902px;top:483.9px;width:68.40000000000009px;overflow:hidden;white-space:nowrap;font-size:10px;line-height:12px;color:#9a9a9a">none</div>
<div class="a" style="left:832px;top:500.5px;width:158.5px;height:1px;background:#d4d4d4"></div>
<div class="a" style="left:832.3px;top:503.7px;width:63.700000000000045px;height:13px;overflow:hidden"><div class="t" style="left:0;top:0;color:#222;font-weight:bold;">TextView</div></div>
<div class="a" style="left:832.3px;top:519.6px;width:63.700000000000045px;height:13px;overflow:hidden"><div class="t" style="left:0;top:0;color:#333;">text</div></div>
<div class="a" style="left:899.3px;top:518.3px;width:72px;height:14.600000000000023px;background:#fff;border:1px solid #b5b5b5"></div>
<div style="position:absolute;left:901px;top:519.6px;width:68px;overflow:hidden;white-space:nowrap;font-size:10px;line-height:12px;color:#3a3ad0">@string/tap_here</div>
<svg style="left:0;top:0" width="1024" height="684"><path d="M977.5 524.6h1M980.5 524.6h1M983.5 524.6h1" stroke="#888" stroke-width="1"/></svg>
<div class="a" style="left:843px;top:539.0px;width:53px;height:13px;overflow:hidden"><div class="t" style="left:0;top:0;color:#333;">text</div></div>
<div class="a" style="left:899.3px;top:537.4px;width:72px;height:14.600000000000023px;background:#fff;border:1px solid #b5b5b5"></div>
<svg style="left:0;top:0" width="1024" height="684"><path d="M977.5 544h1M980.5 544h1M983.5 544h1" stroke="#888" stroke-width="1"/></svg>
<svg style="left:0px;top:0px" width="1024" height="684" viewBox="0 0 1024 684"><path d="M833.5 549l5-5" stroke="#333" stroke-width="1.8"/></svg>
<div class="a" style="left:832.3px;top:558.3px;width:63.700000000000045px;height:13px;overflow:hidden"><div class="t" style="left:0;top:0;color:#333;">contentDescrip</div></div>
<div class="a" style="left:899.3px;top:556.4px;width:72px;height:14.600000000000023px;background:#fff;border:1px solid #b5b5b5"></div>
<svg style="left:0;top:0" width="1024" height="684"><path d="M977.5 563.3h1M980.5 563.3h1M983.5 563.3h1" stroke="#888" stroke-width="1"/></svg>
<div class="a" style="left:843px;top:578.8px;width:53px;height:13px;overflow:hidden"><div class="t" style="left:0;top:0;color:#333;">textAppearance</div></div>
<div class="a" style="left:899.3px;top:575.7px;width:90.40000000000009px;height:17.299999999999955px;background:#fff;border:1px solid #b5b5b5;border-radius:2px"></div>
<div class="a" style="left:970.7px;top:575.7px;width:19px;height:17.299999999999955px;background:#bdbdbd;border-radius:0 2px 2px 0"></div>
<svg style="left:0;top:0" width="1024" height="684"><path d="M976.2 581.35h8l-4 5z" fill="#fff"/></svg>
<div style="position:absolute;left:902px;top:578.4px;width:68.40000000000009px;overflow:hidden;white-space:nowrap;font-size:10px;line-height:12px;color:#9a9a9a">t.Widget.Button</div>
<svg style="left:0px;top:0px" width="1024" height="684" viewBox="0 0 1024 684"><path d="M833 583l3.5 3.5 3.5-3.5" stroke="#666" fill="none" stroke-width="1"/></svg>
<div class="a" style="left:832.3px;top:601.3px;width:63.700000000000045px;height:13px;overflow:hidden"><div class="t" style="left:0;top:0;color:#333;">fontFamily</div></div>
<div class="a" style="left:899.3px;top:598.2px;width:90.40000000000009px;height:17.399999999999977px;background:#fff;border:1px solid #b5b5b5;border-radius:2px"></div>
<div class="a" style="left:970.7px;top:598.2px;width:19px;height:17.399999999999977px;background:#bdbdbd;border-radius:0 2px 2px 0"></div>
<svg style="left:0;top:0" width="1024" height="684"><path d="M976.2 603.9000000000001h8l-4 5z" fill="#fff"/></svg>
<div style="position:absolute;left:902px;top:600.9px;width:68.40000000000009px;overflow:hidden;white-space:nowrap;font-size:10px;line-height:12px;color:#9a9a9a">is-serif-medium</div>
<div class="a" style="left:832.3px;top:623.8px;width:63.700000000000045px;height:13px;overflow:hidden"><div class="t" style="left:0;top:0;color:#333;">typeface</div></div>
<div class="a" style="left:899.3px;top:620.5px;width:90.40000000000009px;height:17.100000000000023px;background:#fff;border:1px solid #b5b5b5;border-radius:2px"></div>
<div class="a" style="left:970.7px;top:620.5px;width:19px;height:17.100000000000023px;background:#bdbdbd;border-radius:0 2px 2px 0"></div>
<svg style="left:0;top:0" width="1024" height="684"><path d="M976.2 626.05h8l-4 5z" fill="#fff"/></svg>
<div style="position:absolute;left:902px;top:623.0px;width:68.40000000000009px;overflow:hidden;white-space:nowrap;font-size:10px;line-height:12px;color:#9a9a9a">none</div>
<div class="a" style="left:899.3px;top:642.5px;width:90.4px;height:2px;background:#c0c0c0"></div>
<div class="a" style="left:826px;top:644px;width:180px;height:1px;background:#a9a9a9"></div>
<div class="a" style="left:1006px;top:57px;width:18px;height:627px;background:#f0f0f0;border-left:1px solid #b9b9b9"></div>
<div class="rot" style="left:1020.2px;top:78.8px;transform:rotate(90deg) scaleX(0.86);">Gradle</div>
<svg style="left:0;top:0" width="1024" height="684"><circle cx="1015.3" cy="69.5" r="4.4" fill="none" stroke="#7bc47f" stroke-width="1.6"/><circle cx="1015.3" cy="69.5" r="2.2" fill="#2e8b57"/><rect x="1012.5" y="659" width="6" height="9.5" rx="1" fill="none" stroke="#444" stroke-width="1.3"/><rect x="1012.5" y="666" width="6" height="2.5" fill="#444"/></svg>
<div class="rot" style="left:1020.5px;top:672px;transform:rotate(90deg) scaleX(0.86);">De</div>
<svg style="left:0px;top:0px" width="1024" height="684" viewBox="0 0 1024 684"><ellipse cx="842.4" cy="204.5" rx="25.4" ry="23.7" fill="none" stroke="#d8141f" stroke-width="3.5"/><ellipse cx="920" cy="288.8" rx="22.8" ry="22.7" fill="none" stroke="#d8141f" stroke-width="3.6"/></svg>
</body></html>
